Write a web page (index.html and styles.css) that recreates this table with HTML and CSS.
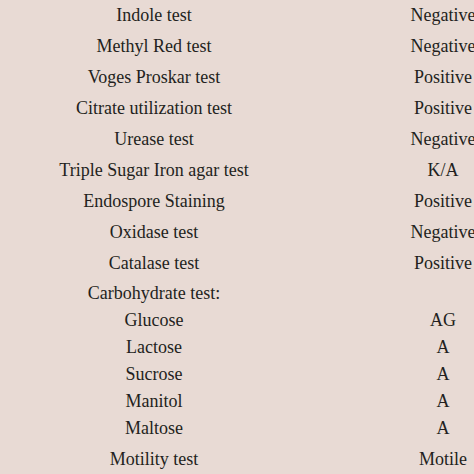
FILE: index.html
```html
<!DOCTYPE html>
<html lang="en">
<head>
<meta charset="utf-8">
<title>Biochemical tests</title>
<link rel="stylesheet" href="styles.css">
</head>
<body>
<div class="table">
  <div class="row"><span class="name">Indole test</span><span class="val">Negative</span></div>
  <div class="row"><span class="name">Methyl Red test</span><span class="val">Negative</span></div>
  <div class="row"><span class="name">Voges Proskar test</span><span class="val">Positive</span></div>
  <div class="row"><span class="name">Citrate utilization test</span><span class="val">Positive</span></div>
  <div class="row"><span class="name">Urease test</span><span class="val">Negative</span></div>
  <div class="row"><span class="name">Triple Sugar Iron agar test</span><span class="val">K/A</span></div>
  <div class="row"><span class="name">Endospore Staining</span><span class="val">Positive</span></div>
  <div class="row"><span class="name">Oxidase test</span><span class="val">Negative</span></div>
  <div class="row"><span class="name">Catalase test</span><span class="val">Positive</span></div>
  <div class="row carb"><span class="name">Carbohydrate test:</span><span class="val"></span></div>
  <div class="row sub"><span class="name">Glucose</span><span class="val">AG</span></div>
  <div class="row sub"><span class="name">Lactose</span><span class="val">A</span></div>
  <div class="row sub"><span class="name">Sucrose</span><span class="val">A</span></div>
  <div class="row sub"><span class="name">Manitol</span><span class="val">A</span></div>
  <div class="row sub"><span class="name">Maltose</span><span class="val">A</span></div>
  <div class="row last"><span class="name">Motility test</span><span class="val">Motile</span></div>
</div>
</body>
</html>
```
FILE: styles.css
```css
html, body {
  margin: 0;
  padding: 0;
  overflow: hidden;
  background: #e8dad4;
}
body {
  width: 474px;
  height: 474px;
  font-family: "Liberation Serif", "Times New Roman", serif;
  font-size: 18px;
  color: #231f20;
}
.table {
  display: flex;
  flex-direction: column;
}
.row {
  display: grid;
  grid-template-columns: 308px 90px;
  column-gap: 90px;
  height: 31px;
  line-height: 31px;
  white-space: nowrap;
}
.name, .val {
  text-align: center;
}
.carb {
  height: 28px;
  line-height: 28px;
}
.sub {
  height: 27px;
  line-height: 27px;
}
.last {
  margin-top: 2px;
}
```
